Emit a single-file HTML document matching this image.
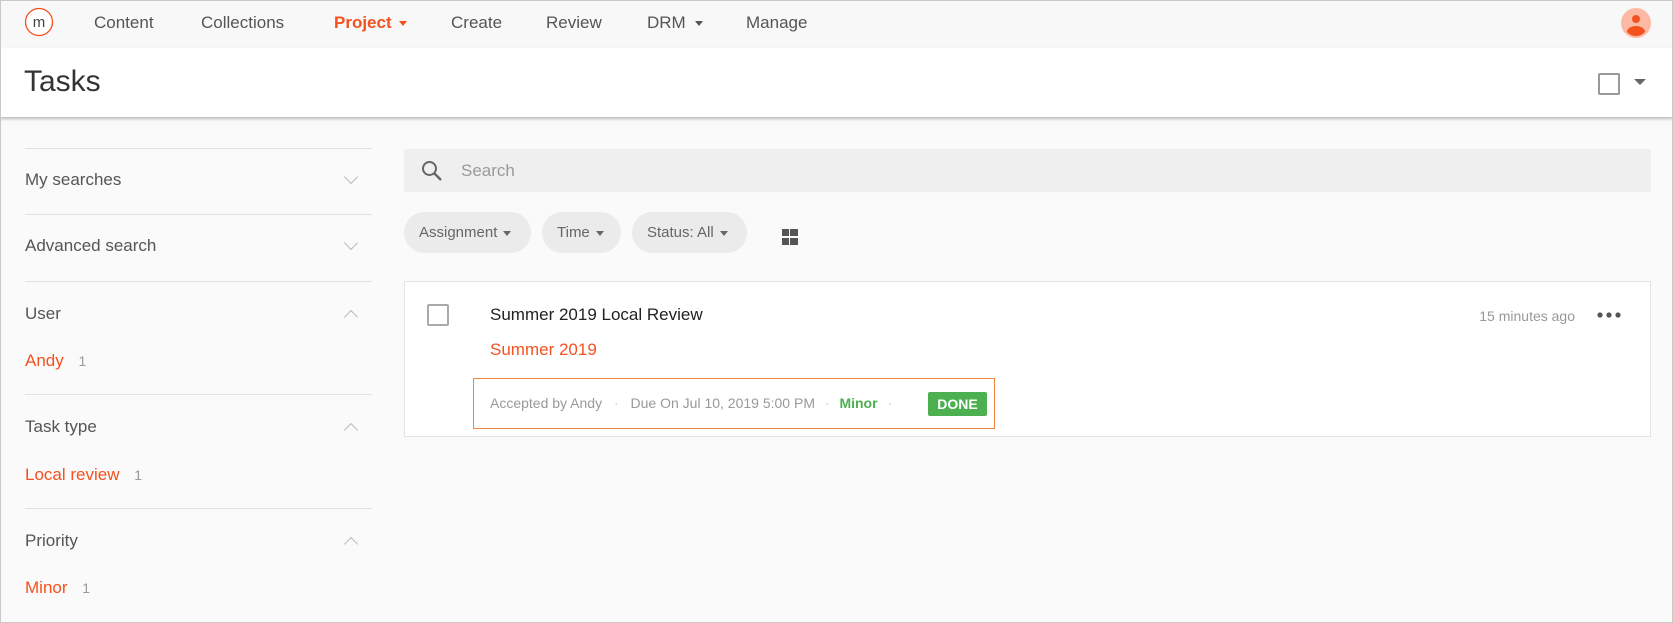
<!DOCTYPE html>
<html><head><style>
*{margin:0;padding:0;box-sizing:border-box}
body{width:1673px;height:623px;overflow:hidden;background:#fafafa;font-family:"Liberation Sans",sans-serif;position:relative;color:#555}
.a{position:absolute;white-space:nowrap}
.frame{position:absolute;left:0;top:0;width:1673px;height:623px;border:1px solid #c8c8c8;pointer-events:none}
.nav{left:0;top:0;width:1673px;height:48px;background:#f8f8f8}
.nl{font-size:17px;color:#555;top:13px}
.hdr{left:0;top:48px;width:1673px;height:69px;background:#fff;box-shadow:0 2px 3px rgba(0,0,0,.25)}
.line{height:1px;background:#e2e2e2;left:25px;width:347px}
.st{font-size:17px;color:#555;left:25px}
.or{color:#f4511e}
.cnt{color:#999;font-size:14px}
.chev{left:346px;width:10px;height:10px;border-right:1.8px solid #bbb;border-bottom:1.8px solid #bbb}
.pill{top:212px;height:41px;border-radius:21px;background:#ebebeb;font-size:15px;color:#666;line-height:41px;padding-left:15px}
.caret{display:inline-block;width:0;height:0;border-left:4px solid transparent;border-right:4px solid transparent;border-top:5px solid #666;vertical-align:middle;margin-left:6px}
</style></head><body>
<div class="a nav"></div>
<svg class="a" style="left:24px;top:7px" width="30" height="30" viewBox="0 0 30 30"><circle cx="15" cy="15" r="13.5" fill="#fff" stroke="#f4511e" stroke-width="1.3"/><text x="15" y="20" text-anchor="middle" font-family="Liberation Sans" font-size="15" fill="#444">m</text></svg>
<div class="a nl" style="left:94px">Content</div>
<div class="a nl" style="left:201px">Collections</div>
<div class="a nl" style="left:334px;color:#f4511e;font-weight:bold">Project <span class="caret" style="border-top-color:#f4511e;margin-left:3px"></span></div>
<div class="a nl" style="left:451px">Create</div>
<div class="a nl" style="left:546px">Review</div>
<div class="a nl" style="left:647px">DRM <span class="caret" style="border-top-color:#555;margin-left:5px"></span></div>
<div class="a nl" style="left:746px">Manage</div>
<svg class="a" style="left:1621px;top:8px" width="30" height="30" viewBox="0 0 30 30"><circle cx="15" cy="15" r="15" fill="#fcb9a4"/><circle cx="15" cy="11" r="4" fill="#f4511e"/><path d="M6 24a9 6 0 0 1 18 0a12 12 0 0 1-18 0z" fill="#f4511e"/></svg>
<div class="a hdr"></div>
<div class="a" style="left:24px;top:65px;font-size:30px;color:#333">Tasks</div>
<div class="a" style="left:1598px;top:73px;width:22px;height:22px;border:2px solid #999;border-radius:2px"></div>
<div class="a" style="left:1634px;top:79px;width:0;height:0;border-left:6px solid transparent;border-right:6px solid transparent;border-top:6px solid #666"></div>

<div class="a line" style="top:148px"></div>
<div class="a st" style="top:170px">My searches</div><div class="a chev" style="top:172px;transform:rotate(45deg)"></div>
<div class="a line" style="top:214px"></div>
<div class="a st" style="top:236px">Advanced search</div><div class="a chev" style="top:238px;transform:rotate(45deg)"></div>
<div class="a line" style="top:281px"></div>
<div class="a st" style="top:304px">User</div><div class="a chev" style="top:312px;transform:rotate(225deg)"></div>
<div class="a st or" style="top:351px">Andy <span class="cnt" style="margin-left:10px">1</span></div>
<div class="a line" style="top:394px"></div>
<div class="a st" style="top:417px">Task type</div><div class="a chev" style="top:425px;transform:rotate(225deg)"></div>
<div class="a st or" style="top:465px">Local review <span class="cnt" style="margin-left:10px">1</span></div>
<div class="a line" style="top:508px"></div>
<div class="a st" style="top:531px">Priority</div><div class="a chev" style="top:539px;transform:rotate(225deg)"></div>
<div class="a st or" style="top:578px">Minor <span class="cnt" style="margin-left:10px">1</span></div>

<div class="a" style="left:404px;top:149px;width:1247px;height:43px;background:#efefef"></div>
<svg class="a" style="left:420px;top:159px" width="24" height="24" viewBox="0 0 24 24"><circle cx="9.5" cy="9.5" r="6.5" fill="none" stroke="#666" stroke-width="2"/><path d="M14.5 14.5L21 21" stroke="#666" stroke-width="2.4"/></svg>
<div class="a" style="left:461px;top:161px;font-size:17px;color:#999">Search</div>

<div class="a pill" style="left:404px;width:127px">Assignment<span class="caret"></span></div>
<div class="a pill" style="left:542px;width:79px">Time<span class="caret"></span></div>
<div class="a pill" style="left:632px;width:115px">Status: All<span class="caret"></span></div>
<svg class="a" style="left:782px;top:229px" width="16" height="16" viewBox="0 0 16 16" fill="#555"><rect x="0" y="0" width="7" height="7"/><rect x="8" y="0" width="8" height="7"/><rect x="0" y="9" width="7" height="7"/><rect x="8" y="9" width="8" height="7"/></svg>

<div class="a" style="left:404px;top:281px;width:1247px;height:156px;background:#fff;border:1px solid #e4e4e4"></div>
<div class="a" style="left:427px;top:304px;width:22px;height:22px;border:2px solid #aaa;border-radius:2px"></div>
<div class="a" style="left:490px;top:305px;font-size:17px;color:#222">Summer 2019 Local Review</div>
<div class="a or" style="left:490px;top:340px;font-size:17px">Summer 2019</div>
<div class="a" style="right:98px;top:308px;font-size:14px;color:#999">15 minutes ago</div>
<svg class="a" style="left:1597px;top:311px" width="24" height="8" viewBox="0 0 24 8" fill="#555"><circle cx="3" cy="4" r="2.6"/><circle cx="12" cy="4" r="2.6"/><circle cx="21" cy="4" r="2.6"/></svg>
<div class="a" style="left:473px;top:378px;width:522px;height:51px;border:1.5px solid #f4853c"></div>
<div class="a" style="left:490px;top:395px;font-size:14px;color:#999">Accepted by Andy <span style="margin:0 8px;color:#ccc">·</span> Due On Jul 10, 2019 5:00 PM <span style="margin:0 6px;color:#ccc">·</span> <span style="color:#4caf50;font-weight:bold">Minor</span> <span style="margin:0 6px;color:#ccc">·</span></div>
<div class="a" style="left:928px;top:392px;width:59px;height:24px;background:#4caf50;color:#fff;font-weight:bold;font-size:14px;text-align:center;line-height:24px;border-radius:2px">DONE</div>
<div class="frame"></div>
</body></html>
